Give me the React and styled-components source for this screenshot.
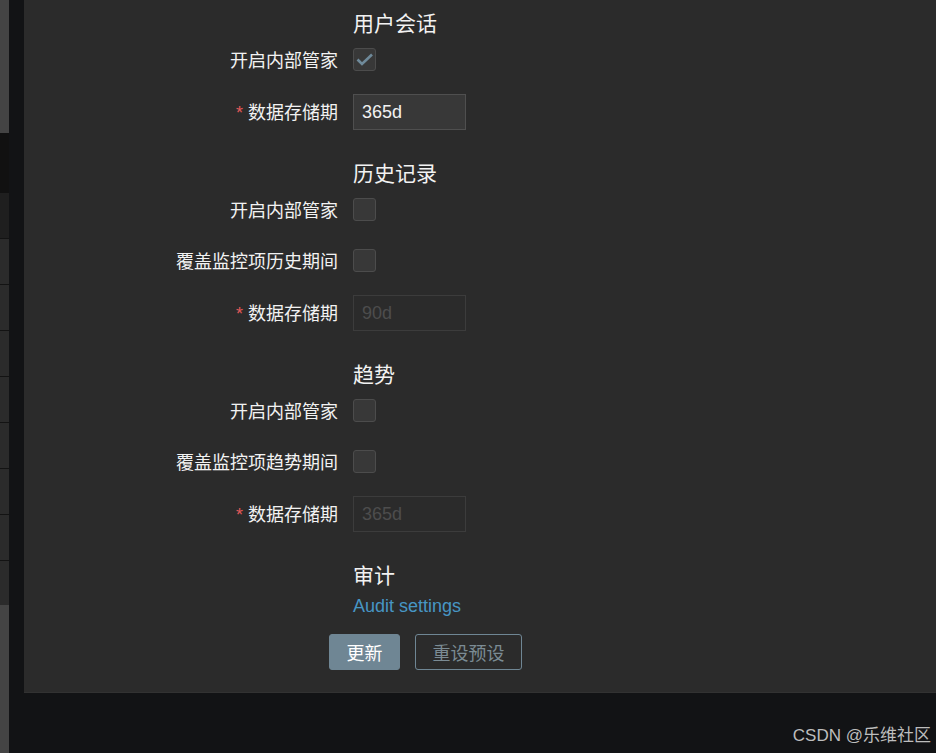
import React from 'react';
import styled, { createGlobalStyle } from 'styled-components';

const LABEL_W = 314;
const COL_GAP = 15;
const CJK = `"Noto Sans CJK SC", sans-serif`;
const LATIN = `"Liberation Sans", Arial, "Noto Sans CJK SC", sans-serif`;

const GlobalStyle = createGlobalStyle`
  html, body {
    margin: 0;
    padding: 0;
    background: #121315;
  }
  body {
    font-family: ${LATIN};
  }
`;

const Page = styled.div`
  position: relative;
  display: flex;
  height: 753px;
  overflow: hidden;
  background: #121315;
`;

const Strip = styled.div`
  display: flex;
  flex-direction: column;
  width: 9px;
  margin-right: 15px;
`;

const StripCell = styled.div`
  box-sizing: border-box;
  height: ${p => (p.$h ? `${p.$h}px` : 'auto')};
  flex: ${p => (p.$h ? 'none' : 1)};
  background: ${p => p.$bg};
  border-top: ${p => (p.$line ? '1px solid #131313' : 'none')};
`;

const Main = styled.div`
  flex: 1;
`;

const Panel = styled.div`
  box-sizing: border-box;
  height: 693px;
  padding-top: 8px;
  background: #2b2b2b;
  border-bottom: 1px solid #323232;
`;

const Section = styled.section`
  & + & {
    margin-top: 27px;
  }
`;

const Title = styled.h3`
  margin: 0 0 6px ${LABEL_W + COL_GAP}px;
  font-family: ${CJK};
  font-size: 21px;
  line-height: 28px;
  font-weight: normal;
  color: #f2f2f2;
`;

const Rows = styled.div`
  display: flex;
  flex-direction: column;
  gap: 17px;
`;

const Row = styled.div`
  display: grid;
  grid-template-columns: ${LABEL_W}px 1fr;
  column-gap: ${COL_GAP}px;
  align-items: center;
  min-height: ${p => p.$h}px;
`;

const Label = styled.label`
  text-align: right;
  white-space: nowrap;
  font-family: ${CJK};
  font-size: 18px;
  line-height: 24px;
  color: #f2f2f2;
`;

const Asterisk = styled.span`
  margin-right: 5px;
  font-family: "Liberation Sans", Arial, sans-serif;
  color: #e45959;
`;

const CheckBox = styled.span`
  box-sizing: border-box;
  justify-self: start;
  display: inline-flex;
  width: 23px;
  height: 23px;
  border: 1px solid #4c4c4c;
  border-radius: 3px;
  background: #383838;

  svg {
    display: block;
  }
`;

const TextInput = styled.input`
  box-sizing: border-box;
  width: 113px;
  height: 36px;
  padding: 0 8px;
  border: 1px solid #4f4f4f;
  border-radius: 0;
  background: #383838;
  color: #f2f2f2;
  font-family: "Liberation Sans", Arial, sans-serif;
  font-size: 18px;
  outline: none;

  &:disabled {
    border-color: #3c3c3c;
    background: #2b2b2b;
    color: #4d4d4d;
    opacity: 1;
  }
`;

const LinkLine = styled.div`
  padding-top: 1px;
  margin-left: ${LABEL_W + COL_GAP}px;
  line-height: 22px;
`;

const AuditLink = styled.a`
  font-family: "Liberation Sans", Arial, sans-serif;
  font-size: 18px;
  color: #4796c4;
  text-decoration: none;
`;

const Buttons = styled.div`
  display: flex;
  gap: 15px;
  margin: 16px 0 0 305px;
`;

const Button = styled.button`
  box-sizing: border-box;
  height: 36px;
  padding: 0 16.5px;
  border: 1px solid #6f8694;
  border-radius: 3px;
  background: ${p => (p.$primary ? '#6f8694' : 'transparent')};
  color: ${p => (p.$primary ? '#ffffff' : '#7b8b94')};
  font-family: ${CJK};
  font-size: 18px;
  line-height: 34px;
  cursor: pointer;
`;

const Watermark = styled.div`
  position: absolute;
  right: 5px;
  bottom: 6px;
  font-family: ${LATIN};
  font-size: 17px;
  line-height: 22px;
  color: #bdbdbd;
`;

const stripCells = [
  { h: 133, bg: '#444444' },
  { h: 60, bg: '#111111' },
  { h: 45, bg: '#1f1f1f' },
  ...[46, 46, 46, 46, 46, 46, 46, 45].map(h => ({ h, bg: '#2b2b2b', line: true })),
  { bg: '#444444' },
];

const sections = [
  {
    title: '用户会话',
    fields: [
      { type: 'check', label: '开启内部管家', checked: true },
      { type: 'input', label: '数据存储期', value: '365d', required: true },
    ],
  },
  {
    title: '历史记录',
    fields: [
      { type: 'check', label: '开启内部管家' },
      { type: 'check', label: '覆盖监控项历史期间' },
      { type: 'input', label: '数据存储期', value: '90d', required: true, disabled: true },
    ],
  },
  {
    title: '趋势',
    fields: [
      { type: 'check', label: '开启内部管家' },
      { type: 'check', label: '覆盖监控项趋势期间' },
      { type: 'input', label: '数据存储期', value: '365d', required: true, disabled: true },
    ],
  },
];

const Check = ({ checked }) => (
  <CheckBox>
    {checked && (
      <svg width="21" height="21" viewBox="0 0 21 21">
        <path d="M3.5 10.5 L8 15 L18 5.5" fill="none" stroke="#6f8a9a" strokeWidth="2.6" />
      </svg>
    )}
  </CheckBox>
);

const Field = ({ field }) => (
  <Row $h={field.type === 'input' ? 38 : 34}>
    <Label>
      {field.required && <Asterisk>*</Asterisk>}
      {field.label}
    </Label>
    {field.type === 'check' ? (
      <Check checked={field.checked} />
    ) : (
      <TextInput defaultValue={field.value} disabled={field.disabled} />
    )}
  </Row>
);

const App = () => (
  <Page>
    <GlobalStyle />
    <Strip>
      {stripCells.map((c, i) => (
        <StripCell key={i} $h={c.h} $bg={c.bg} $line={c.line} />
      ))}
    </Strip>
    <Main>
      <Panel>
        {sections.map(s => (
          <Section key={s.title}>
            <Title>{s.title}</Title>
            <Rows>
              {s.fields.map((f, i) => (
                <Field key={i} field={f} />
              ))}
            </Rows>
          </Section>
        ))}
        <Section>
          <Title>审计</Title>
          <LinkLine>
            <AuditLink href="#">Audit settings</AuditLink>
          </LinkLine>
        </Section>
        <Buttons>
          <Button $primary>更新</Button>
          <Button>重设预设</Button>
        </Buttons>
      </Panel>
    </Main>
    <Watermark>CSDN @乐维社区</Watermark>
  </Page>
);

export default App;
